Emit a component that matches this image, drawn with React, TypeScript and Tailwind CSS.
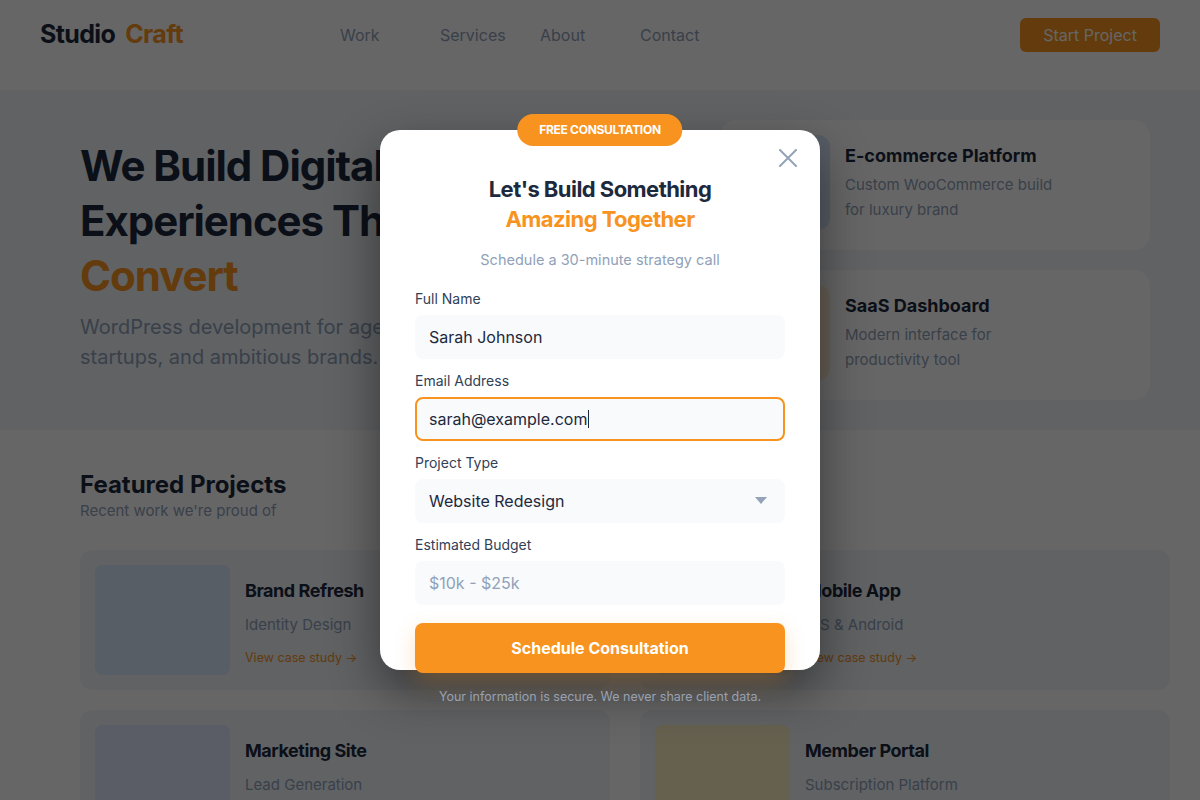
import React from "react";

const font = { fontFamily: "Inter, 'Noto Sans', sans-serif" };

function HeroCard({ title, lines, tone }: { title: string; lines: string[]; tone: string }) {
  return (
    <div className="flex h-[130px] gap-[15px] rounded-2xl bg-white p-[15px]">
      <div className={`h-[95px] w-[95px] shrink-0 rounded-xl ${tone}`} />
      <div className="pt-[9px]">
        <div className="text-[18px] font-bold leading-6 text-slate-800">{title}</div>
        <div className="mt-1 text-[15px] leading-[25px] text-slate-400">
          {lines.map((l) => (
            <div key={l}>{l}</div>
          ))}
        </div>
      </div>
    </div>
  );
}

function ProjectCard({ title, sub, tone }: { title: string; sub: string; tone: string }) {
  return (
    <div className="flex h-[140px] gap-[15px] rounded-xl bg-slate-100 p-[15px]">
      <div className={`h-[110px] w-[135px] shrink-0 rounded-lg ${tone}`} />
      <div className="pt-[14px]">
        <div className="text-[18px] font-bold leading-6 tracking-tight text-slate-800">{title}</div>
        <div className="mt-[11px] text-[15px] leading-[22px] text-slate-400">{sub}</div>
        <div className="mt-[13px] text-[12.5px] leading-[18px] text-[#f7931e]">View case study →</div>
      </div>
    </div>
  );
}

function Field({ label, children }: { label: string; children: React.ReactNode }) {
  return (
    <div>
      <div className="text-[14px] leading-5 text-slate-700">{label}</div>
      <div className="mt-1.5">{children}</div>
    </div>
  );
}

export default function App() {
  return (
    <div style={font} className="relative h-[800px] w-[1200px] overflow-hidden bg-white">
      {/* top navigation */}
      <header className="h-[90px] bg-white">
        <div className="flex h-[70px] items-center px-10">
          <div className="flex w-[300px] gap-[10px] text-[25px] font-bold tracking-tight">
            <span className="text-slate-800">Studio</span>
            <span className="text-[#f7931e]">Craft</span>
          </div>
          <nav className="flex text-[16px] text-slate-400">
            <span className="w-[100px]">Work</span>
            <span className="w-[100px]">Services</span>
            <span className="w-[100px]">About</span>
            <span className="w-[100px]">Contact</span>
          </nav>
          <button className="ml-auto h-[34px] w-[140px] rounded-md bg-[#f7931e] text-[16px] text-white">
            Start Project
          </button>
        </div>
      </header>

      {/* hero */}
      <section className="flex h-[340px] items-center justify-between bg-slate-100 pl-20 pr-[50px]">
        <div className="-mt-[11px]">
          <h1 className="text-[42px] font-bold leading-[55px] tracking-tight text-slate-800">
            We Build Digital
            <br />
            Experiences That
            <br />
            <span className="text-[#f7931e]">Convert</span>
          </h1>
          <p className="mt-[9px] w-[430px] text-[20px] leading-[30px] text-slate-400">
            WordPress development for agencies, startups, and ambitious brands.
          </p>
        </div>
        <div className="flex w-[430px] flex-col gap-5">
          <HeroCard title="E-commerce Platform" lines={["Custom WooCommerce build", "for luxury brand"]} tone="bg-blue-100" />
          <HeroCard title="SaaS Dashboard" lines={["Modern interface for", "productivity tool"]} tone="bg-orange-100" />
        </div>
      </section>

      {/* featured work */}
      <section className="px-20 pt-[39px]">
        <h2 className="text-[24px] font-bold leading-8 text-slate-800">Featured Projects</h2>
        <p className="text-[15px] leading-5 text-slate-400">Recent work we're proud of</p>
        <div className="mt-[29px] grid w-[1090px] grid-cols-2 gap-x-[30px] gap-y-5">
          <ProjectCard title="Brand Refresh" sub="Identity Design" tone="bg-blue-100" />
          <ProjectCard title="Mobile App" sub="iOS & Android" tone="bg-slate-200" />
          <ProjectCard title="Marketing Site" sub="Lead Generation" tone="bg-indigo-100" />
          <ProjectCard title="Member Portal" sub="Subscription Platform" tone="bg-amber-100" />
        </div>
      </section>

      {/* consultation dialog */}
      <div className="absolute inset-0 flex items-center justify-center bg-black/60">
        <div className="relative h-[540px] w-[440px] rounded-[20px] bg-white px-[35px] pt-[44px] shadow-[0_20px_50px_rgba(0,0,0,0.45)]">
          <div className="absolute -top-4 left-1/2 flex h-8 -translate-x-1/2 items-center rounded-full bg-[#f7931e] px-[22px] text-[12px] font-bold tracking-tight text-white">
            FREE CONSULTATION
          </div>
          <button className="absolute right-[23px] top-[19px] p-0" aria-label="Close">
            <svg width="18" height="18" viewBox="0 0 18 18" fill="none" stroke="#94a3b8" strokeWidth="2" strokeLinecap="round">
              <path d="M1 1l16 16M17 1L1 17" />
            </svg>
          </button>

          <h3 className="text-center text-[22px] font-bold leading-[30px] tracking-tight text-slate-800">
            Let's Build Something
            <br />
            <span className="text-[#f7931e]">Amazing Together</span>
          </h3>
          <p className="mt-4 text-center text-[14.5px] leading-5 text-slate-400">Schedule a 30-minute strategy call</p>

          <div className="mt-[19px] flex flex-col gap-3">
            <Field label="Full Name">
              <div className="flex h-11 items-center rounded-lg bg-slate-50 px-[14px] text-[16px] text-slate-800">
                Sarah Johnson
              </div>
            </Field>
            <Field label="Email Address">
              <div className="flex h-11 items-center rounded-lg border-2 border-[#f7931e] bg-slate-50 px-3 text-[16px] text-slate-800">
                sarah@example.com
                <span className="ml-px h-[18px] w-px bg-slate-800" />
              </div>
            </Field>
            <Field label="Project Type">
              <div className="flex h-11 items-center justify-between rounded-lg bg-slate-50 pl-[14px] pr-[18px] text-[16px] text-slate-800">
                Website Redesign
                <svg width="12" height="8" viewBox="0 0 12 8">
                  <path d="M0 0h12L6 7z" fill="#94a3b8" />
                </svg>
              </div>
            </Field>
            <Field label="Estimated Budget">
              <div className="flex h-11 items-center rounded-lg bg-slate-50 px-[14px] text-[16px] text-slate-400">
                $10k - $25k
              </div>
            </Field>
          </div>

          <button className="mt-[18px] h-[50px] w-full rounded-lg bg-[#f7931e] text-[16px] font-bold text-white shadow-[0_8px_20px_rgba(247,147,30,0.25)]">
            Schedule Consultation
          </button>
          <p className="mt-[15px] text-center text-[12.5px] leading-[18px] text-gray-400">
            Your information is secure. We never share client data.
          </p>
        </div>
      </div>
    </div>
  );
}
